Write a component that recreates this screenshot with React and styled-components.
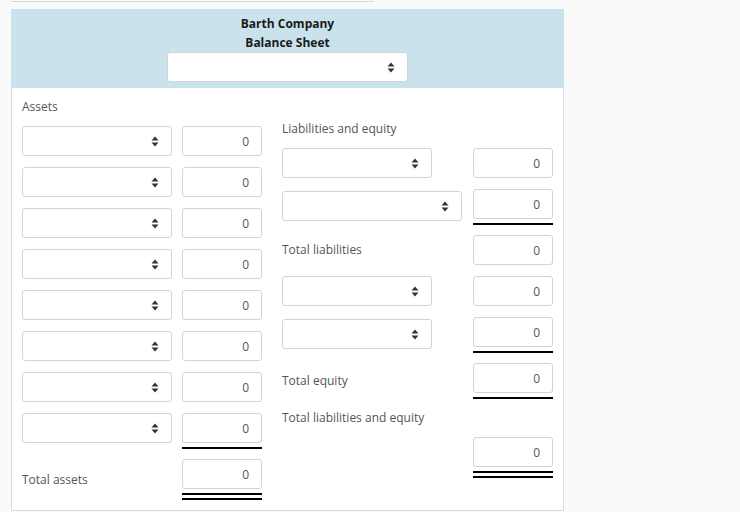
import React from 'react';
import styled, { createGlobalStyle } from 'styled-components';

const GlobalStyle = createGlobalStyle`
	html, body {
		margin: 0;
		padding: 0;
		background: #fafafa;
		font-family: 'Open Sans', 'Liberation Sans', Arial, sans-serif;
	}
`;

const Page = styled.div`
	padding-left: 11px;
	width: 553px;
`;

// leftover edge of the block above the sheet
const TopEdge = styled.div`
	margin-top: 1px;
	width: 363px;
	height: 1px;
	background: #d9d9d9;
`;

const Sheet = styled.div`
	margin-top: 7px;
	width: 553px;
`;

const Header = styled.div`
	background: #c9e2ec;
	height: 79px;
	box-sizing: border-box;
	padding-top: 5px;
	display: flex;
	flex-direction: column;
	align-items: center;
`;

const Title = styled.div`
	font-size: 12px;
	line-height: 19px;
	font-weight: 700;
	color: #1a1a1a;
`;

const Body = styled.div`
	box-sizing: border-box;
	background: #fff;
	border: 1px solid #dcdcdc;
	border-top: none;
	padding: 11px 10px 10px 10px;
	display: grid;
	grid-template-columns: 240px 271px;
	column-gap: 20px;
`;

const Column = styled.div`
	display: flex;
	flex-direction: column;
	align-items: flex-start;
`;

// section / group captions sitting on their own line
const Heading = styled.div`
	font-size: 12px;
	line-height: 16px;
	color: #555;
	margin-top: ${(p) => p.$mt || 0}px;
`;

// caption next to an amount box
const RowLabel = styled.div`
	font-size: 12px;
	line-height: 16px;
	color: #555;
	padding-top: ${(p) => (p.$top === undefined ? 7 : p.$top)}px;
`;

const Row = styled.div`
	align-self: stretch;
	display: flex;
	justify-content: space-between;
	align-items: flex-start;
	margin-top: ${(p) => (p.$mt === undefined ? 11 : p.$mt)}px;
`;

const SelectBox = styled.div`
	box-sizing: border-box;
	width: ${(p) => p.$w || 150}px;
	height: 30px;
	margin-top: ${(p) => (p.$drop ? 2 : 0)}px;
	border: 1px solid #d4d4d4;
	border-radius: 3px;
	background: #fff;
	display: flex;
	align-items: center;
	justify-content: flex-end;
	padding-right: 12px;
`;

const AmountCell = styled.div`
	width: 80px;
	display: flex;
	flex-direction: column;
`;

const Amount = styled.div`
	box-sizing: border-box;
	height: 30px;
	border: 1px solid #d4d4d4;
	border-radius: 3px;
	background: #fff;
	font-size: 12px;
	line-height: 29px;
	color: #555;
	text-align: right;
	padding-right: 12px;
`;

const Rule = styled.div`
	margin-top: 4px;
	height: 2px;
	background: #000;
`;

const DoubleRule = styled.div`
	margin-top: 4px;
	height: 7px;
	border-top: 2px solid #000;
	border-bottom: 2px solid #000;
	box-sizing: border-box;
`;

const Arrows = () => (
	<svg width="8" height="11" viewBox="0 0 8 11">
		<path d="M4 0.5 L7.5 4.5 H0.5 Z" fill="#333" />
		<path d="M0.5 6.5 H7.5 L4 10.5 Z" fill="#333" />
	</svg>
);

const Select = ({ w, drop }) => (
	<SelectBox $w={w} $drop={drop}>
		<Arrows />
	</SelectBox>
);

const Money = ({ rule }) => (
	<AmountCell>
		<Amount>0</Amount>
		{rule === 'single' && <Rule />}
		{rule === 'double' && <DoubleRule />}
	</AmountCell>
);

const assetRows = [0, 1, 2, 3, 4, 5, 6, 7];

export default function App() {
	return (
		<Page>
			<GlobalStyle />
			<TopEdge />
			<Sheet>
				<Header>
					<Title>Barth Company</Title>
					<Title>Balance Sheet</Title>
					<Select w={241} />
				</Header>

				<Body>
					{/* assets side */}
					<Column>
						<Heading>Assets</Heading>
						{assetRows.map((i) => (
							<Row key={i} $mt={i === 0 ? 11 : 11}>
								<Select />
								<Money rule={i === assetRows.length - 1 ? 'single' : null} />
							</Row>
						))}
						<Row $mt={10}>
							<RowLabel $top={13}>Total assets</RowLabel>
							<Money rule="double" />
						</Row>
					</Column>

					{/* liabilities + equity side */}
					<Column>
						<Heading $mt={22}>Liabilities and equity</Heading>
						<Row>
							<Select />
							<Money />
						</Row>
						<Row>
							<Select w={180} drop />
							<Money rule="single" />
						</Row>
						<Row $mt={10}>
							<RowLabel>Total liabilities</RowLabel>
							<Money />
						</Row>
						<Row>
							<Select />
							<Money />
						</Row>
						<Row>
							<Select drop />
							<Money rule="single" />
						</Row>
						<Row $mt={10}>
							<RowLabel $top={10}>Total equity</RowLabel>
							<Money rule="single" />
						</Row>
						<Heading $mt={11}>Total liabilities and equity</Heading>
						<Row>
							<div />
							<Money rule="double" />
						</Row>
					</Column>
				</Body>
			</Sheet>
		</Page>
	);
}
